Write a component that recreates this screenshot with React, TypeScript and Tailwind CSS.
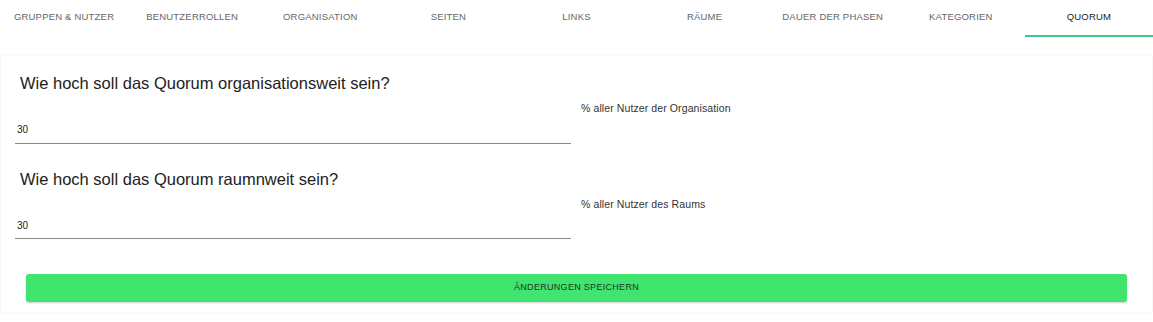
import { useState } from "react";

const tabs = [
    "Gruppen & Nutzer",
    "Benutzerrollen",
    "Organisation",
    "Seiten",
    "Links",
    "Räume",
    "Dauer der Phasen",
    "Kategorien",
    "Quorum",
];

const quorumFields = [
    { id: "org", question: "Wie hoch soll das Quorum organisationsweit sein?", hint: "% aller Nutzer der Organisation" },
    { id: "room", question: "Wie hoch soll das Quorum raumnweit sein?", hint: "% aller Nutzer des Raums" },
];

export default function App() {
    const [active, setActive] = useState("Quorum");
    const [values, setValues] = useState<Record<string, string>>({ org: "30", room: "30" });

    return (
        <div className="min-h-screen bg-white font-['Liberation_Sans',Arial,sans-serif]">
            {/* Tabs */}
            <nav className="flex h-[37px]">
                {tabs.map(tab => (
                    <button
                        key={tab}
                        onClick={() => setActive(tab)}
                        className={`flex-1 flex items-start justify-center pt-[10px] text-[9.5px] uppercase tracking-[0.2px] border-b-2 ${active === tab ? "text-[#222] border-[#3cc98a]" : "text-[#666] border-transparent"}`}
                    >
                        {tab}
                    </button>
                ))}
            </nav>

            {/* Card */}
            <main className="mt-[19px] mx-px bg-white shadow-[0_0_3px_rgba(0,0,0,0.08)] pt-[17px] pb-[10px]">
                {quorumFields.map(field => (
                    <section key={field.id} className="mb-[25px]">
                        <h2 className="pl-[19px] text-[16.5px] leading-[20px] text-[#222]">{field.question}</h2>
                        <div className="flex mt-[9px]">
                            <div className="ml-[14px] w-[556px] pt-[14px]">
                                <input
                                    value={values[field.id]}
                                    onChange={e => setValues({ ...values, [field.id]: e.target.value })}
                                    className="w-full h-[25px] pl-[2px] pb-[2px] text-[10px] text-[#222] border-b border-[#8a8a8a] outline-none"
                                />
                            </div>
                            <span className="ml-[10px] text-[10.5px] leading-[12px] tracking-[0.1px] text-[#333]">{field.hint}</span>
                        </div>
                    </section>
                ))}

                <div className="px-[25px] mt-[34px]">
                    <button className="w-full h-[28px] rounded-[3px] bg-[#41e46f] shadow-[0_1px_2px_rgba(0,0,0,0.2)] text-[9px] uppercase tracking-[0.3px] text-[#1a3a1f]">
                        Änderungen speichern
                    </button>
                </div>
            </main>
        </div>
    );
}
